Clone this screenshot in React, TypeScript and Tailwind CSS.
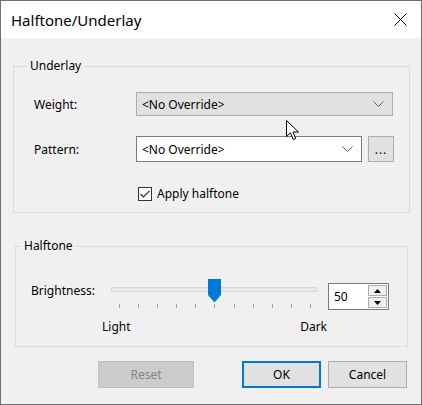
import React from "react";

const Chevron = () => (
  <svg width="11" height="6" viewBox="0 0 11 6" className="shrink-0">
    <path d="M0.5 0.5 L5.5 5.5 L10.5 0.5" fill="none" stroke="#606060" strokeWidth="1" />
  </svg>
);

const Combo = ({ width, white }: { width: string; white?: boolean }) => (
  <div
    className={`${width} flex items-center justify-between pl-[5px] pr-[8px] border ${
      white ? "h-[26px] bg-white border-[#7a7a7a]" : "h-[24px] bg-[#e1e1e1] border-[#adadad]"
    }`}
  >
    <span className="pt-[1px]">&lt;No Override&gt;</span>
    <Chevron />
  </div>
);

const ticks = Array.from({ length: 11 }, (_, i) => i);

export default function App() {
  return (
    <div className="relative w-[422px] h-[405px] border border-[#6f6f6f] bg-[#f0f0f0] flex flex-col text-[12px] text-black font-['Segoe_UI','Noto_Sans',sans-serif] leading-[16px]">
      {/* Title bar */}
      <div className="h-[37px] bg-white flex items-center justify-between pl-[10px] pr-[14px]">
        <span className="text-[15px] leading-[20px]">Halftone/Underlay</span>
        <svg width="13" height="13" viewBox="0 0 13 13">
          <path d="M0.5 0.5 L12.5 12.5 M12.5 0.5 L0.5 12.5" stroke="#000" strokeWidth="1" />
        </svg>
      </div>

      {/* Underlay group */}
      <div className="relative mt-[28px] ml-[12px] w-[397px] h-[147px] border border-[#dcdcdc]">
        <span className="absolute -top-[9px] left-[13px] bg-[#f0f0f0] px-[3px]">Underlay</span>
        <div className="flex items-center mt-[25px] pl-[20px]">
          <span className="w-[102px] pt-[2px]">Weight:</span>
          <Combo width="w-[257px]" />
        </div>
        <div className="flex items-center mt-[20px] pl-[20px]">
          <span className="w-[102px] pt-[1px]">Pattern:</span>
          <Combo width="w-[226px]" white />
          <div className="ml-[6px] w-[26px] h-[26px] bg-[#e1e1e1] border border-[#adadad] flex items-end justify-center pb-[5px] leading-none tracking-[1px]">
            ...
          </div>
        </div>
        <div className="flex items-center mt-[23px] pl-[124px]">
          <div className="w-[14px] h-[14px] bg-white border border-[#333] flex items-center justify-center">
            <svg width="10" height="8" viewBox="0 0 10 8">
              <path d="M0.5 4 L3.5 7 L9.5 0.8" fill="none" stroke="#333" strokeWidth="1.2" />
            </svg>
          </div>
          <span className="ml-[5px] pt-[1px]">Apply halftone</span>
        </div>
      </div>

      {/* Halftone group */}
      <div className="relative mt-[33px] ml-[14px] w-[393px] h-[101px] border border-[#dcdcdc]">
        <span className="absolute -top-[9px] left-[6px] bg-[#f0f0f0] px-[2px]">Halftone</span>
        <div className="flex items-start mt-[32px] pl-[15px]">
          <span className="w-[80px] mt-[4px]">Brightness:</span>
          <div className="relative w-[206px] h-[30px]">
            <div className="absolute left-0 right-0 top-[8px] h-[5px] bg-[#e7eaea] border border-[#d6d6d6]" />
            <svg className="absolute left-[97px] top-0" width="13" height="24" viewBox="0 0 13 24">
              <path d="M0 0 H13 V16 L6.5 23.5 L0 16 Z" fill="#0078d7" />
            </svg>
            <div className="absolute left-[8px] top-[25px] w-[192px] flex justify-between">
              {ticks.map((t) => (
                <div key={t} className="w-[1px] h-[4px] bg-[#a0a0a0]" />
              ))}
            </div>
          </div>
          <div className="ml-[11px] mt-[4px] w-[61px] h-[27px] bg-white border border-[#7a7a7a] flex items-center">
            <span className="ml-[5px] flex-1 pt-[1px]">50</span>
            <div className="flex flex-col gap-[1px] mr-[1px]">
              <div className="w-[19px] h-[11px] bg-[#f0f0f0] border border-[#adadad] flex items-center justify-center">
                <svg width="7" height="4" viewBox="0 0 7 4">
                  <path d="M0 4 L3.5 0 L7 4 Z" fill="#000" />
                </svg>
              </div>
              <div className="w-[19px] h-[11px] bg-[#f0f0f0] border border-[#adadad] flex items-center justify-center">
                <svg width="7" height="4" viewBox="0 0 7 4">
                  <path d="M0 0 L3.5 4 L7 0 Z" fill="#000" />
                </svg>
              </div>
            </div>
          </div>
        </div>
        <div className="flex justify-between w-[225px] ml-[86px] mt-[9px]">
          <span>Light</span>
          <span>Dark</span>
        </div>
      </div>

      {/* Buttons */}
      <div className="flex mt-[14px] pl-[97px]">
        <div className="w-[96px] h-[27px] bg-[#cccccc] border border-[#bfbfbf] text-[#838383] flex items-center justify-center">
          Reset
        </div>
        <div className="ml-[48px] w-[79px] h-[27px] bg-[#e1e1e1] border-2 border-[#0078d7] flex items-center justify-center">
          OK
        </div>
        <div className="ml-[7px] w-[79px] h-[27px] bg-[#e1e1e1] border border-[#adadad] flex items-center justify-center">
          Cancel
        </div>
      </div>

      {/* Mouse pointer */}
      <svg className="absolute left-[285px] top-[119px]" width="14" height="21" viewBox="0 0 14 21">
        <path
          d="M0.5 0.5 L0.5 16.5 L4.5 12.8 L7.3 19.5 L9.7 18.5 L7 12 L12.5 12 Z"
          fill="#fff"
          stroke="#000"
          strokeWidth="1"
          strokeLinejoin="miter"
        />
      </svg>
    </div>
  );
}
